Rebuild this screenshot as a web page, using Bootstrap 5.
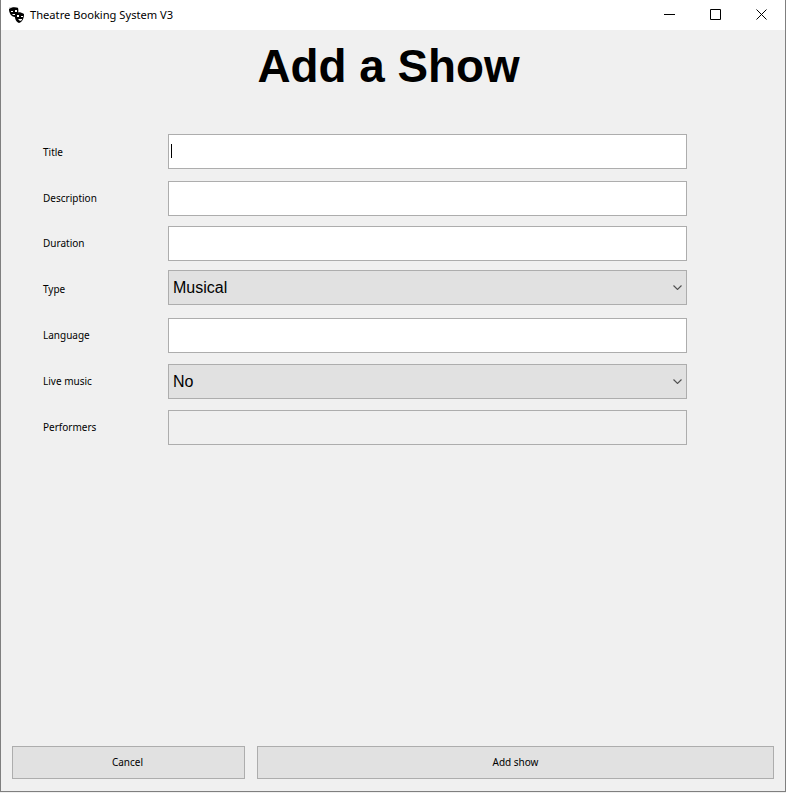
<!DOCTYPE html>
<html lang="en">
<head>
<meta charset="utf-8">
<title>Theatre Booking System V3</title>
<link href="https://cdn.jsdelivr.net/npm/bootstrap@5.3.0/dist/css/bootstrap.min.css" rel="stylesheet">
<style>
html, body { height: 793px; overflow: hidden; background: #f0f0f0; }
body { font-family: "Noto Sans", "Liberation Sans", sans-serif; color: #000; }
.win-frame { width: 786px; height: 792px; background: #f0f0f0; border: solid #7f7f7f; border-width: 0 1px 1px 1px; }
.win-bar { height: 30px; background: #fff; flex: none; padding-left: 7px; }
.win-logo { margin-top: -1px; }
.win-name { font-size: 11.15px; margin-left: 5px; line-height: 30px; }
.win-ctrl { width: 46px; height: 28px; margin-bottom: 2px; }
.win-ctrls { margin-right: 1px; }
.page-head { font-family: "Liberation Sans", Arial, sans-serif; font-weight: 700; font-size: 45.8px; line-height: 52px; margin: 11px 0 41px; text-align: center; padding-right: 9px; }
.field-row { height: 35px; padding-left: 42px; }
.gap-a { margin-top: 12px; } .gap-b { margin-top: 10px; } .gap-c { margin-top: 9px; }
.gap-d { margin-top: 13px; } .gap-e { margin-top: 11px; }
.field-label { width: 125px; flex: none; font-size: 10px; }
.label-nudge { position: relative; top: 1px; }
.label-nudge-more { position: relative; top: 2px; }
.field-box { width: 519px; height: 35px; position: relative; }
.field-box .form-control, .field-box .form-select {
  height: 35px; min-height: 0; border: 1px solid #adadad; border-radius: 0; box-shadow: none;
  font-family: "Liberation Sans", Arial, sans-serif; font-size: 16px; color: #000; padding: 0 20px 0 4px; }
.field-box .form-select { background-color: #e1e1e1;
  background-image: url("data:image/svg+xml,%3csvg xmlns='http://www.w3.org/2000/svg' viewBox='0 0 9 5'%3e%3cpath fill='none' stroke='%23505050' stroke-width='1.1' d='M.5.5l4 4 4-4'/%3e%3c/svg%3e");
  background-size: 9px 5px; background-position: right 4px center; }
.field-box .form-control { background-color: #fff; }
.field-box .form-control:disabled { background-color: #f0f0f0; }
.text-caret { position: absolute; left: 3px; top: 10px; width: 1px; height: 14px; background: #000; }
.action-row { padding: 0 11px 12px 11px; gap: 12px; }
.act-btn { height: 33px; border: 1px solid #adadad; border-radius: 0; background: #e1e1e1; color: #000; font-size: 10px; padding: 0; }
.act-cancel { width: 233px; flex: none; padding-right: 2px; }
.act-add { width: 517px; flex: none; }
</style>
</head>
<body>
<div class="win-frame d-flex flex-column">
  <div class="win-bar d-flex align-items-center justify-content-between">
    <div class="d-flex align-items-center">
      <svg class="win-logo" width="17" height="18" viewBox="0 0 17 18" aria-hidden="true">
        <path fill="#ddd" d="M1 1h9v5H1z"/>
        <path fill="#000" d="M1 3c3-2 6-2 9-1 1 3 0 7-3 9-3 0-6-3-6-8z"/>
        <path fill="#000" d="M7 7c3-1 6-1 9 1 0 5-2 8-5 9-3-1-5-5-4-10z"/>
        <path fill="#fff" d="M3 5h2v1H3zM7 4h2v2H7zM9 9h2v2H9zM13 10h2v1h-2zM10 13h4v1l-2 1zM4 8h3v1H5z"/>
      </svg>
      <span class="win-name">Theatre Booking System V3</span>
    </div>
    <div class="d-flex win-ctrls">
      <div class="win-ctrl d-flex align-items-center justify-content-center"><svg width="11" height="11" viewBox="0 0 11 11"><path d="M0 5.5h11" stroke="#000" fill="none"/></svg></div>
      <div class="win-ctrl d-flex align-items-center justify-content-center"><svg width="11" height="11" viewBox="0 0 11 11"><path d="M.5.5h10v10H.5z" stroke="#000" fill="none"/></svg></div>
      <div class="win-ctrl d-flex align-items-center justify-content-center"><svg width="11" height="11" viewBox="0 0 11 11"><path d="M.5.5l10 10M10.5.5l-10 10" stroke="#000" fill="none"/></svg></div>
    </div>
  </div>

  <h1 class="page-head">Add a Show</h1>

  <form class="flex-grow-1 d-flex flex-column">
    <div class="field-row d-flex align-items-center">
      <label class="field-label label-nudge">Title</label>
      <div class="field-box"><input class="form-control" type="text"><span class="text-caret"></span></div>
    </div>
    <div class="field-row gap-a d-flex align-items-center">
      <label class="field-label">Description</label>
      <div class="field-box"><input class="form-control" type="text"></div>
    </div>
    <div class="field-row gap-b d-flex align-items-center">
      <label class="field-label">Duration</label>
      <div class="field-box"><input class="form-control" type="text"></div>
    </div>
    <div class="field-row gap-c d-flex align-items-center">
      <label class="field-label label-nudge-more">Type</label>
      <div class="field-box"><select class="form-select"><option>Musical</option></select></div>
    </div>
    <div class="field-row gap-d d-flex align-items-center">
      <label class="field-label">Language</label>
      <div class="field-box"><input class="form-control" type="text"></div>
    </div>
    <div class="field-row gap-e d-flex align-items-center">
      <label class="field-label">Live music</label>
      <div class="field-box"><select class="form-select"><option>No</option></select></div>
    </div>
    <div class="field-row gap-e d-flex align-items-center">
      <label class="field-label">Performers</label>
      <div class="field-box"><input class="form-control" type="text" disabled></div>
    </div>
    <div class="action-row d-flex mt-auto">
      <button type="button" class="btn act-btn act-cancel">Cancel</button>
      <button type="button" class="btn act-btn act-add">Add show</button>
    </div>
  </form>
</div>
<script src="https://cdn.jsdelivr.net/npm/bootstrap@5.3.0/dist/js/bootstrap.bundle.min.js"></script>
</body>
</html>
